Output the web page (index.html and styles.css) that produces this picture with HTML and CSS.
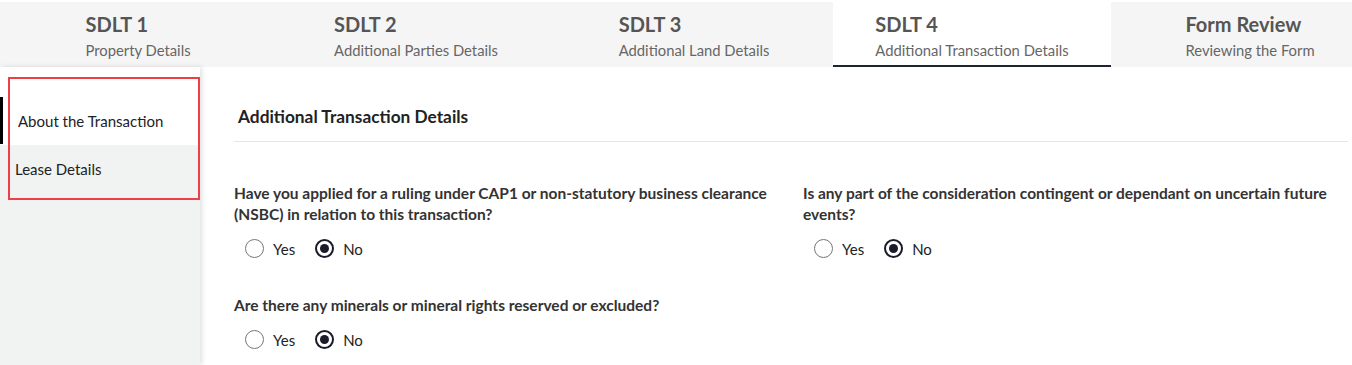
FILE: index.html
```html
<!DOCTYPE html>
<html lang="en">

<head>
    <meta charset="UTF-8">
    <meta name="viewport" content="width=device-width, initial-scale=1.0">
    <title>SDLT 4 - Additional Transaction Details</title>
    <link rel="stylesheet" href="styles.css">
</head>

<body>
    <div class="tabs">
        <div class="tab">
            <div class="tab-inner">
                <div class="tab-title">SDLT 1</div>
                <div class="tab-sub">Property Details</div>
            </div>
        </div>
        <div class="tab">
            <div class="tab-inner">
                <div class="tab-title">SDLT 2</div>
                <div class="tab-sub">Additional Parties Details</div>
            </div>
        </div>
        <div class="tab">
            <div class="tab-inner">
                <div class="tab-title">SDLT 3</div>
                <div class="tab-sub">Additional Land Details</div>
            </div>
        </div>
        <div class="tab active">
            <div class="tab-inner">
                <div class="tab-title">SDLT 4</div>
                <div class="tab-sub">Additional Transaction Details</div>
            </div>
        </div>
        <div class="tab">
            <div class="tab-inner">
                <div class="tab-title">Form Review</div>
                <div class="tab-sub">Reviewing the Form</div>
            </div>
        </div>
    </div>

    <div class="layout">
        <div class="sidebar">
            <div class="side-item current">About the Transaction</div>
            <div class="side-item">Lease Details</div>
            <div class="highlight"></div>
        </div>

        <div class="content">
            <h2 class="section-title">Additional Transaction Details</h2>

            <div class="questions">
                <div class="question">
                    <p class="question-text">Have you applied for a ruling under CAP1 or non-statutory business clearance (NSBC) in relation to this transaction?</p>
                    <div class="options">
                        <label class="option"><span class="radio"></span>Yes</label>
                        <label class="option"><span class="radio checked"></span>No</label>
                    </div>
                </div>
                <div class="question">
                    <p class="question-text">Is any part of the consideration contingent or dependant on uncertain future events?</p>
                    <div class="options">
                        <label class="option"><span class="radio"></span>Yes</label>
                        <label class="option"><span class="radio checked"></span>No</label>
                    </div>
                </div>
                <div class="question">
                    <p class="question-text">Are there any minerals or mineral rights reserved or excluded?</p>
                    <div class="options">
                        <label class="option"><span class="radio"></span>Yes</label>
                        <label class="option"><span class="radio checked"></span>No</label>
                    </div>
                </div>
            </div>
        </div>
    </div>
</body>

</html>
```

FILE: styles.css
```css
* {
    margin: 0;
    padding: 0;
    box-sizing: border-box;
}

body {
    font-family: Lato, "Noto Sans", sans-serif;
    background: #fff;
    color: #333;
    overflow: hidden;
    padding-top: 2px;
}

/* top step tabs */
.tabs {
    display: grid;
    grid-template-columns: repeat(5, 278px);
    height: 65px;
    margin-left: -1px;
    background: #f5f5f5;
}

.tab {
    display: flex;
    justify-content: center;
    padding-top: 10px;
}

.tab.active {
    background: #fff;
    border-bottom: 2px solid #1b2430;
}

.tab-title {
    font-size: 20px;
    font-weight: 700;
    color: #555;
    line-height: 24px;
}

.tab-sub {
    font-size: 14.8px;
    color: #666;
    line-height: 24px;
    margin-top: 2px;
}

/* body */
.layout {
    display: flex;
    min-height: calc(100vh - 67px);
}

.sidebar {
    position: relative;
    width: 200px;
    flex-shrink: 0;
    background: #f1f2f2;
    box-shadow: 2px 0 5px rgba(0, 0, 0, 0.12);
}

.side-item {
    font-size: 15px;
    color: #222;
    padding: 0 15px;
    height: 48px;
    line-height: 48px;
}

.side-item.current {
    position: relative;
    background: #fff;
    height: 78px;
    line-height: 50px;
    padding-top: 29px;
    padding-left: 18px;
}

.side-item.current::before {
    content: "";
    position: absolute;
    left: 0;
    top: 30px;
    width: 3px;
    height: 47px;
    background: #000;
}

.highlight {
    position: absolute;
    left: 8px;
    top: 10px;
    width: 192px;
    height: 123px;
    border: 2px solid #ef3e45;
}

.content {
    flex: 1;
    padding: 0 4px 0 34px;
}

.section-title {
    font-size: 17.3px;
    font-weight: 700;
    color: #222;
    padding: 37px 0 11px 4px;
    line-height: 26px;
    border-bottom: 1px solid #e6e6e6;
}

.questions {
    display: grid;
    grid-template-columns: 569px 1fr;
    row-gap: 37px;
    padding-top: 41px;
}

.question-text {
    font-size: 15.5px;
    font-weight: 700;
    color: #333;
    line-height: 21px;
    padding-right: 10px;
}

.options {
    display: flex;
    gap: 20px;
    margin-top: 14px;
    padding-left: 11px;
}

.option {
    display: flex;
    align-items: center;
    gap: 9px;
    font-size: 15px;
    color: #222;
}

.radio {
    width: 19px;
    height: 19px;
    border: 1.5px solid #767676;
    border-radius: 50%;
    display: flex;
    align-items: center;
    justify-content: center;
}

.radio.checked {
    border: 2px solid #1a1a2a;
}

.radio.checked::after {
    content: "";
    width: 9px;
    height: 9px;
    border-radius: 50%;
    background: #1a1a2a;
}
```
